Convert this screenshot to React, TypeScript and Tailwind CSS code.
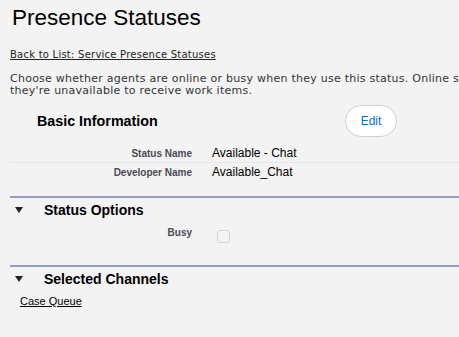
import { Fragment } from "react";

const Triangle = () => (
  <svg width="8" height="6" viewBox="0 0 8 6" className="shrink-0">
    <polygon points="0,0 8,0 4,6" fill="#222" />
  </svg>
);

const fields = [
  { label: "Status Name", value: "Available - Chat" },
  { label: "Developer Name", value: "Available_Chat" },
];

const App = () => {
  return (
    <div className="min-h-screen w-full overflow-hidden bg-[#f3f3f3] font-['Liberation_Sans',Arial,sans-serif] text-black">
      <div className="w-[900px] pl-[10px]">
        <h1 className="pl-[2px] pt-[5px] text-[22.5px] leading-[26px] font-normal">Presence Statuses</h1>

        <a
          href="#"
          className="mt-[18px] block font-['DejaVu_Sans',Verdana,sans-serif] text-[10px] leading-[12px] tracking-[0.24px] text-[#222] underline"
        >
          Back to List: Service Presence Statuses
        </a>

        <p className="mt-[12px] whitespace-nowrap font-['DejaVu_Sans',Verdana,sans-serif] text-[11px] leading-[12px] tracking-[0.25px] text-[#333]">
          Choose whether agents are online or busy when they use this status. Online statuses let agents receive work items, while busy statuses indicate that
          <br />
          they're unavailable to receive work items.
        </p>

        {/* Basic Information */}
        <div className="mt-[8px] flex items-center">
          <h2 className="w-[335px] pl-[27px] text-[14.3px] font-bold leading-[16px]">Basic Information</h2>
          <button className="h-[32px] w-[52px] rounded-full border border-[#d0d0d0] bg-white text-[12px] text-[#0070d2]">
            Edit
          </button>
        </div>

        <div>
          {fields.map((f, i) => (
            <div
              key={f.label}
              className={
                i === 0
                  ? "flex items-baseline border-b border-[#e6e6e6] pt-[9px] pb-[2px]"
                  : "flex items-baseline pt-[2px]"
              }
            >
              <div className="w-[182px] text-right text-[10px] font-bold leading-[12px] text-[#4a4a56]">{f.label}</div>
              <div className="pl-[20px] text-[12px] leading-[14px]">{f.value}</div>
            </div>
          ))}
        </div>

        {/* Status Options */}
        <div className="mt-[17px] border-t-2 border-[#919fc0]">
          <div className="flex items-center pt-[4px] leading-[16px]">
            <div className="w-[34px] pl-[5px]">
              <Triangle />
            </div>
            <h3 className="text-[14px] font-bold">Status Options</h3>
          </div>
          <div className="flex h-[47px] items-start">
            <div className="w-[182px] pt-[8.5px] text-right text-[10px] font-bold leading-[12px] text-[#4a4a56]">Busy</div>
            <div className="pl-[25px] pt-[12px]">
              <div className="h-[13px] w-[13px] rounded-[3px] border border-[#d3d3d3] bg-[#f3f3f3]" />
            </div>
          </div>
        </div>

        {/* Selected Channels */}
        <div className="border-t-2 border-[#919fc0]">
          <div className="flex items-center pt-[4px] leading-[16px]">
            <div className="w-[34px] pl-[5px]">
              <Triangle />
            </div>
            <h3 className="text-[14px] font-bold">Selected Channels</h3>
          </div>
          <Fragment>
            <a href="#" className="ml-[10px] mt-[8px] inline-block text-[11px] leading-[13px] text-black underline">
              Case Queue
            </a>
          </Fragment>
        </div>
      </div>
    </div>
  );
};

export default App;
